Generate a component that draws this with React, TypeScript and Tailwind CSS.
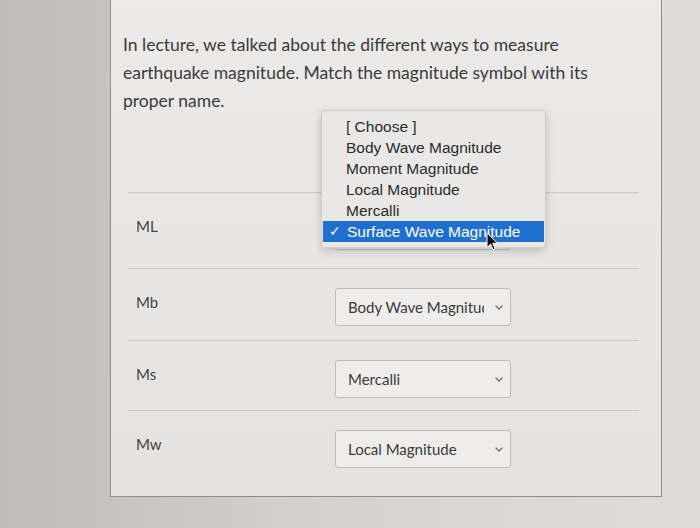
import React from 'react';

const rows = [
  { symbol: 'ML', value: 'Surface Wave Magnitude', pb: 'pb-[18px]' },
  { symbol: 'Mb', value: 'Body Wave Magnitude', pb: 'pb-[14px]' },
  { symbol: 'Ms', value: 'Mercalli', pb: 'pb-[12px]' },
  { symbol: 'Mw', value: 'Local Magnitude', pb: 'pb-[12px]' },
];

const options = [
  '[ Choose ]',
  'Body Wave Magnitude',
  'Moment Magnitude',
  'Local Magnitude',
  'Mercalli',
  'Surface Wave Magnitude',
];

const Chevron: React.FC = () => (
  <svg width="8" height="5" viewBox="0 0 8 5" fill="none" className="shrink-0">
    <path d="M1 1l3 3 3-3" stroke="#666" strokeWidth="1.2" strokeLinecap="round" strokeLinejoin="round" />
  </svg>
);

const App: React.FC = () => {
  return (
    <div className="relative w-[700px] h-[528px] overflow-hidden bg-linear-to-r from-[#bebcba] via-[#d6d4d2] to-[#dfdddb]" style={{ fontFamily: 'Lato, "Noto Sans", sans-serif' }}>
      <div className="ml-[110px] w-[552px] h-[497px] border-x border-b border-[#8e8e8e] bg-linear-to-b from-[#ebeae8] to-[#e4e3e1] pt-[31px]">
        <p className="ml-[12px] text-[17.5px] leading-[28px] text-[#3b3b3b]">
          <span className="block whitespace-nowrap">In lecture, we talked about the different ways to measure</span>
          <span className="block whitespace-nowrap">earthquake magnitude. Match the magnitude symbol with its</span>
          <span className="block whitespace-nowrap">proper name.</span>
        </p>

        <div className="ml-[17px] mr-[22px] mt-[77px]">
          {rows.map((row) => (
            <div key={row.symbol} className={`flex border-t border-[#c9c8c6] pt-[19px] ${row.pb}`}>
              <div className="w-[207px] pl-[8px] text-[15px] leading-[28px] text-[#444]">{row.symbol}</div>
              <div className="w-[176px] h-[38px] flex items-center justify-between rounded-[3px] border border-[#bdbcba] bg-[#eeedeb] pl-[12px] pr-[7px]">
                <div className="w-[136px] shrink-0 overflow-hidden whitespace-nowrap text-[15px] text-[#3a3a3a]">{row.value}</div>
                <Chevron />
              </div>
            </div>
          ))}
        </div>
      </div>

      {/* open select menu */}
      <div className="absolute left-[321px] top-[110px] w-[225px] rounded-[4px] border border-[#cfcecc] bg-[#e9e8e6] py-[5px] shadow-[0_3px_8px_rgba(0,0,0,0.18)]" style={{ fontFamily: '"Liberation Sans", Arial, sans-serif' }}>
        {options.map((opt, i) => {
          const selected = i === options.length - 1;
          return (
            <div key={opt} className={`relative h-[21px] flex items-center pl-[24px] text-[15.5px] whitespace-nowrap ${selected ? 'mx-px bg-[#1f6fd0] text-white' : 'text-[#2b2b2b]'}`}>
              {selected && <span className="absolute left-[6px] text-[14px]">✓</span>}
              {opt}
            </div>
          );
        })}
      </div>

      {/* mouse pointer */}
      <svg className="absolute left-[486px] top-[232px]" width="12" height="19" viewBox="0 0 12 19">
        <path d="M1 1v14.5l3.6-3.4 2.4 5.6 2.2-1-2.4-5.4h4.8z" fill="#111" stroke="#fff" strokeWidth="1" strokeLinejoin="round" />
      </svg>
    </div>
  );
};

export default App;
